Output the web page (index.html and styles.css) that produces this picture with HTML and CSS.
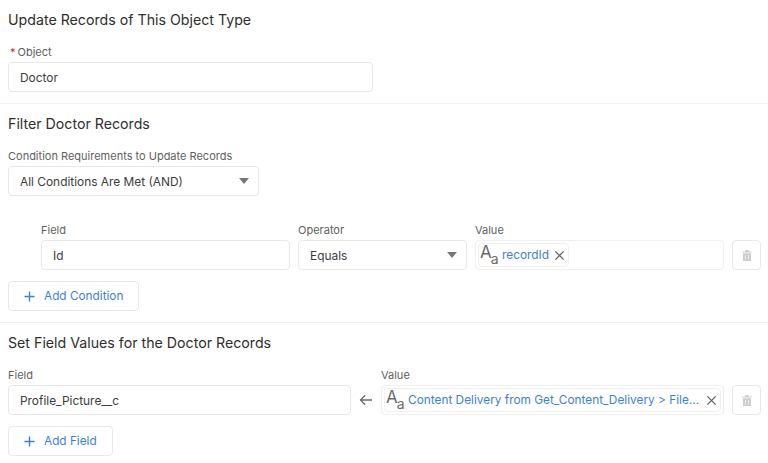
FILE: index.html
```html
<!DOCTYPE html>
<html lang="en">
<head>
<meta charset="utf-8">
<title>Update Records</title>
<link rel="stylesheet" href="styles.css">
</head>
<body>
<section class="section first">
  <h2 class="heading">Update Records of This Object Type</h2>
  <div class="field object-field">
    <label class="label"><span class="req">*</span>Object</label>
    <div class="box">Doctor</div>
  </div>
</section>
<section class="section second">
  <h2 class="heading">Filter Doctor Records</h2>
  <div class="field cond-field">
    <label class="label">Condition Requirements to Update Records</label>
    <div class="box select">All Conditions Are Met (AND)<svg class="caret" viewBox="0 0 12 7"><path d="M0 0h12L6 7z"/></svg></div>
  </div>
  <div class="row filter-row">
    <div class="field f-field"><label class="label">Field</label><div class="box">Id</div></div>
    <div class="field f-op"><label class="label">Operator</label><div class="box select">Equals<svg class="caret" viewBox="0 0 12 7"><path d="M0 0h12L6 7z"/></svg></div></div>
    <div class="field f-val"><label class="label">Value</label>
      <div class="box pillbox">
        <span class="pill">
          <span class="aa"><span class="big">A</span><span class="small">a</span></span>
          <span class="pill-text">recordId</span>
          <svg class="x" viewBox="0 0 12 12"><path d="M1.5 1.5l9 9M10.5 1.5l-9 9"/></svg>
        </span>
      </div>
    </div>
    <button class="trash" type="button"><svg viewBox="0 0 12 12"><path d="M1.2 1.9h9.6v1.1H1.2zM4.3.6h3.4v1.3H4.3zM2 3.7h8v7.7H2z"/><path class="slot" d="M4 5.4h1v4.4H4zM7 5.4h1v4.4H7z"/></svg></button>
  </div>
  <button class="add" type="button"><svg class="plus" viewBox="0 0 12 12"><path d="M6 .5v11M.5 6h11"/></svg>Add Condition</button>
</section>
<section class="section third">
  <h2 class="heading">Set Field Values for the Doctor Records</h2>
  <div class="row set-row">
    <div class="field s-field"><label class="label">Field</label><div class="box">Profile_Picture__c</div></div>
    <svg class="arrow" viewBox="0 0 14 12"><path d="M13 6H1.5M6.2 1.2L1.5 6l4.7 4.8"/></svg>
    <div class="field s-val"><label class="label">Value</label>
      <div class="box pillbox">
        <span class="pill wide">
          <span class="aa"><span class="big">A</span><span class="small">a</span></span>
          <span class="pill-text">Content Delivery from Get_Content_Delivery &gt; File...</span>
          <svg class="x" viewBox="0 0 12 12"><path d="M1.5 1.5l9 9M10.5 1.5l-9 9"/></svg>
        </span>
      </div>
    </div>
    <button class="trash" type="button"><svg viewBox="0 0 12 12"><path d="M1.2 1.9h9.6v1.1H1.2zM4.3.6h3.4v1.3H4.3zM2 3.7h8v7.7H2z"/><path class="slot" d="M4 5.4h1v4.4H4zM7 5.4h1v4.4H7z"/></svg></button>
  </div>
  <button class="add add-field" type="button"><svg class="plus" viewBox="0 0 12 12"><path d="M6 .5v11M.5 6h11"/></svg>Add Field</button>
</section>
</body>
</html>
```
FILE: styles.css
```css
* { box-sizing: border-box; }
html, body { margin: 0; padding: 0; }
body {
  width: 768px;
  height: 463px;
  overflow: hidden;
  background: #fff;
  font-family: Inter, "Liberation Sans", sans-serif;
  color: #3a3a3a;
  font-size: 12px;
}
.section { padding: 0 7px 0 8px; }
.first { height: 104px; padding-top: 11px; border-bottom: 1px solid #f0f0f0; }
.second { height: 219px; padding-top: 11px; border-bottom: 1px solid #f0f0f0; }
.third { padding-top: 11px; }
.heading {
  margin: 0;
  font-size: 14.2px;
  font-weight: 400;
  line-height: 18px;
  color: #2e2e2e;
}
.field { display: flex; flex-direction: column; }
.label {
  font-size: 11px;
  line-height: 14px;
  height: 17px;
  color: #606060;
}
.req { color: #c9302c; margin: 0 2px; }
.box {
  height: 30px;
  border: 1px solid #e8e8e8;
  border-radius: 4px;
  padding: 0 11px;
  display: flex;
  align-items: center;
  font-size: 11.9px;
  color: #3c3c3c;
  background: #fff;
}
.object-field { width: 365px; margin-top: 16px; }
.cond-field { width: 251px; margin-top: 16px; }
.select { justify-content: space-between; padding-right: 9px; }
.caret { width: 10px; height: 6px; fill: #777; }
.row { display: flex; align-items: flex-end; }
.filter-row { margin: 27px 0 0 33px; gap: 8px; }
.f-field { width: 249px; }
.f-op { width: 169px; }
.f-val { width: 249px; }
.set-row { margin-top: 16px; }
.s-field { width: 343px; }
.s-val { width: 343px; }
.arrow {
  width: 14px;
  height: 12px;
  margin: 0 8px 9px 8px;
  fill: none;
  stroke: #6b6b6b;
  stroke-width: 1.3;
}
.set-row .trash { margin-left: 8px; }
.pillbox { padding: 0 2px; border-color: #f0f0f0; }
.pill {
  display: flex;
  align-items: center;
  height: 24px;
  padding: 0 3px 0 1px;
  border: 1px solid #f0f0f0;
  border-radius: 4px;
  background: #fff;
  min-width: 0;
}
.pill.wide { flex: 1; }
.aa { display: flex; flex: none; width: 20px; height: 22px; margin-right: 2px; color: #6a6a6a; }
.big { font-size: 17px; line-height: 17px; }
.small { font-size: 14px; line-height: 14px; margin-top: 8px; margin-left: -1px; }
.pill-text {
  flex: 1;
  min-width: 0;
  white-space: nowrap;
  overflow: hidden;
  font-size: 11.85px;
  color: #3d7fd6;
}
.x {
  width: 11px;
  height: 11px;
  margin-left: 5px;
  fill: none;
  stroke: #666;
  stroke-width: 1.5;
  flex: none;
}
.trash {
  width: 29px;
  height: 30px;
  padding: 0;
  border: 1px solid #e8e8e8;
  border-radius: 4px;
  background: #fff;
  display: flex;
  align-items: center;
  justify-content: center;
}
.trash svg { width: 12px; height: 13px; fill: #cdcdcd; }
.trash .slot { fill: #eee; }
.add {
  display: flex;
  align-items: center;
  height: 30px;
  margin-top: 11px;
  padding: 0 15px;
  border: 1px solid #e8e8e8;
  border-radius: 4px;
  background: #fff;
  font: 11.8px Inter, "Liberation Sans", sans-serif;
  color: #3d7fd6;
}
.plus {
  width: 11px;
  height: 11px;
  margin-right: 9px;
  fill: none;
  stroke: #3d7fd6;
  stroke-width: 1.5;
}
```
